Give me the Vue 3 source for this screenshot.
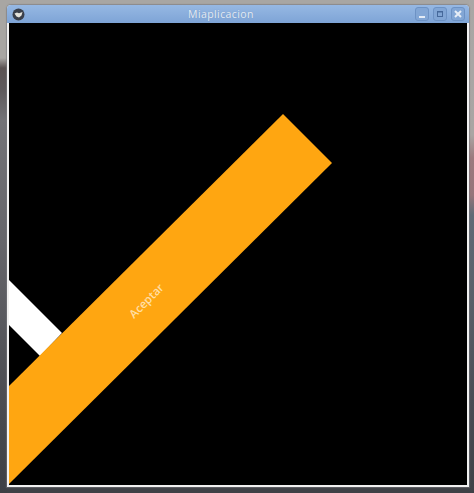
<template>
  <div class="escritorio">
    <div class="ventana">
      <div class="barra">
        <span class="logo">
          <svg width="13" height="13" viewBox="0 0 13 13">
            <circle cx="6.5" cy="6.5" r="6" fill="#3a3f4a" />
            <path d="M2.5 5.5 L5 4.5 L7 5.2 L10.5 4 L9.5 7.5 L7 9.5 L4.5 8.5 Z" fill="#e4e2da" />
          </svg>
        </span>
        <span class="titulo">Miaplicacion</span>
        <div class="botones">
          <span class="boton">
            <svg width="12" height="12" viewBox="0 0 12 12"><rect x="3" y="8" width="6" height="2" fill="#e3ebf6" /></svg>
          </span>
          <span class="boton">
            <svg width="12" height="12" viewBox="0 0 12 12"><rect x="3.5" y="3.5" width="5" height="5" fill="none" stroke="#45689a" /><rect x="3" y="3" width="6" height="1.5" fill="#45689a" /></svg>
          </span>
          <span class="boton">
            <svg width="12" height="12" viewBox="0 0 12 12"><path d="M3 3 L9 9 M9 3 L3 9" stroke="#e6edf6" stroke-width="2" /></svg>
          </span>
        </div>
      </div>
      <div class="lienzo">
        <svg class="dibujo" width="458" height="462" viewBox="0 0 458 462">
          <polygon points="0,257 53,310 31,333 0,302" fill="#ffffff" />
          <polygon points="274,91 323,140 0,461 0,363" fill="#ffa611" />
          <text class="aceptar" transform="translate(125 296) rotate(-45)">Aceptar</text>
        </svg>
      </div>
    </div>
  </div>
</template>

<script setup>
</script>

<style>
html,
body {
  margin: 0;
  background: #3c3f44;
}
</style>

<style scoped>
/* fondo de pantalla: tiras verticales a cada lado de la ventana */
.escritorio {
  width: 474px;
  height: 493px;
  box-sizing: border-box;
  padding: 5px 5px 6px 7px;
  overflow: hidden;
  background:
    linear-gradient(180deg, #a8a6a3 0, #a8a6a3 58px, #5b5353 68px, #5e5a5c 90px, #737377 120px, #66666b 240px, #55565b 340px, #46484d 430px, #3e4045 100%) left / 7px 100% no-repeat,
    linear-gradient(180deg, #aaa7a5 0, #aaa5a3 135px, #9c7a7e 158px, #96757a 195px, #5f6a76 215px, #596069 300px, #4a4d54 400px, #3f4147 100%) right / 5px 100% no-repeat,
    linear-gradient(180deg, #a8a6a3 0, #a8a6a3 8px, #3f4146 9px, #3f4146 100%);
}

.ventana {
  height: 482px;
  box-sizing: border-box;
  display: flex;
  flex-direction: column;
  padding: 0 2px 2px;
  background: #f1f1f1;
  border-radius: 4px 4px 0 0;
  box-shadow: 0 0 1px 1px rgba(120, 120, 125, 0.6);
}

.barra {
  height: 18px;
  flex: none;
  display: flex;
  align-items: center;
  margin: 0 -2px;
  padding: 0 4px 0 5px;
  background: linear-gradient(180deg, #96b8e3 0, #7ea4d6 100%);
  border-radius: 4px 4px 0 0;
}

.logo {
  display: flex;
}

.titulo {
  flex: 1;
  padding-left: 2px;
  text-align: center;
  font-family: "Open Sans", sans-serif;
  font-size: 10.5px;
  letter-spacing: 0.4px;
  color: #e4ecf6;
  text-shadow: 0 0 1px #6f8fbb;
}

.botones {
  display: flex;
  gap: 4px;
}

.boton {
  display: flex;
  width: 12px;
  height: 12px;
  border: 1px solid #6d92c4;
  border-radius: 3px;
  background: #82a6d5;
}

.lienzo {
  flex: 1;
  background: #000000;
}

.dibujo {
  display: block;
}

.aceptar {
  font-family: "Open Sans", sans-serif;
  font-size: 11.5px;
  font-weight: 600;
  fill: #ffdfa6;
}
</style>
